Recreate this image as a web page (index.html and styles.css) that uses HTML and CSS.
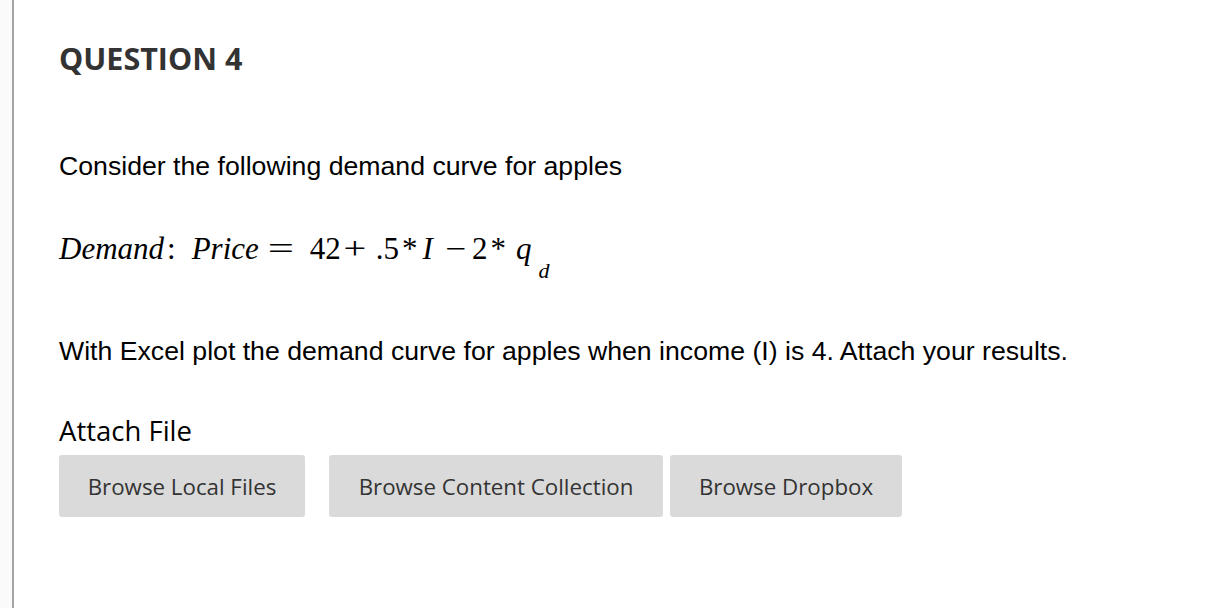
FILE: index.html
```html
<!DOCTYPE html>
<html>
<head>
<meta charset="utf-8">
<link rel="stylesheet" href="styles.css">
</head>
<body>
<div class="page">
  <div class="gutter"></div>
  <main class="question">
    <h2 class="q-title">QUESTION 4</h2>
    <p class="text first">Consider the following demand curve for apples</p>
    <p class="math"><i class="v demand">Demand</i><span class="colon">:</span><i class="v price">Price</i><span class="op eq"><span>=</span></span><span class="num n42">42</span><span class="op plus"><span>+</span></span><span class="num dot">.5</span><span class="ast">*</span><i class="v iv">I</i><span class="op minus"><span>&minus;</span></span><span class="num n2">2</span><span class="ast">*</span><i class="v q">q</i><sub><i>d</i></sub></p>
    <p class="text second">With Excel plot the demand curve for apples when income (I) is 4. Attach your results.</p>
    <div class="attach">
      <div class="attach-label">Attach File</div>
      <div class="buttons">
        <button class="btn btn-local">Browse Local Files</button>
        <button class="btn btn-content">Browse Content Collection</button>
        <button class="btn btn-dropbox">Browse Dropbox</button>
      </div>
    </div>
  </main>
</div>
</body>
</html>
```
FILE: styles.css
```css
html, body {
  margin: 0;
  padding: 0;
  background: #ffffff;
}
.page {
  display: flex;
  min-height: 608px;
}
.gutter {
  width: 12px;
  background: #fafafa;
  border-right: 2px solid #a3a3a3;
  flex: none;
}
.question {
  padding: 38px 0 0 45px;
  flex: 1;
}
.q-title {
  margin: 0;
  font-family: "Open Sans", sans-serif;
  font-weight: 700;
  font-size: 30.5px;
  line-height: 40px;
  color: #333333;
}
.text {
  margin: 0;
  font-family: "Liberation Sans", Arial, sans-serif;
  font-size: 26.67px;
  line-height: 32px;
  color: #000;
}
.text.first {
  margin-top: 72px;
}
.math {
  margin: 49px 0 0 0;
  font-family: "Liberation Serif", "Times New Roman", serif;
  font-size: 31px;
  line-height: 36px;
  height: 36px;
  color: #000;
  white-space: nowrap;
}
.math .colon { margin: 0 16px 0 3px; }
.math .op {
  display: inline-block;
  text-align: center;
}
.math .op span {
  display: inline-block;
}
.math .eq { width: 26px; margin: 0 16px 0 9px; }
.math .eq span { transform: scaleX(1.5); }
.math .plus { width: 22px; margin: 0 10px 0 3px; }
.math .plus span { transform: scaleX(1.3); }
.math .minus { width: 20px; margin: 0 6px 0 13px; }
.math .minus span { transform: scaleX(1.2); }
.math .ast { margin: 0 3px 0 3px; }
.math .iv { margin-left: 2px; }
.math .q { margin-left: 7px; }
.math sub {
  font-size: 22px;
  vertical-align: -19px;
  line-height: 0;
  margin-left: 7px;
}
.text.second {
  margin-top: 68px;
}
.attach {
  margin-top: 45px;
}
.attach-label {
  font-family: "Open Sans", sans-serif;
  font-size: 27.5px;
  line-height: 38px;
  color: #000;
}
.buttons {
  display: flex;
  margin-top: 5px;
}
.btn {
  font-family: "Open Sans", sans-serif;
  font-size: 22.3px;
  color: #333333;
  background: #dadada;
  border: none;
  border-radius: 3px;
  height: 62px;
  padding: 0;
}
.btn-local { width: 246px; margin-right: 24px; }
.btn-content { width: 334px; margin-right: 7px; }
.btn-dropbox { width: 232px; }
```
